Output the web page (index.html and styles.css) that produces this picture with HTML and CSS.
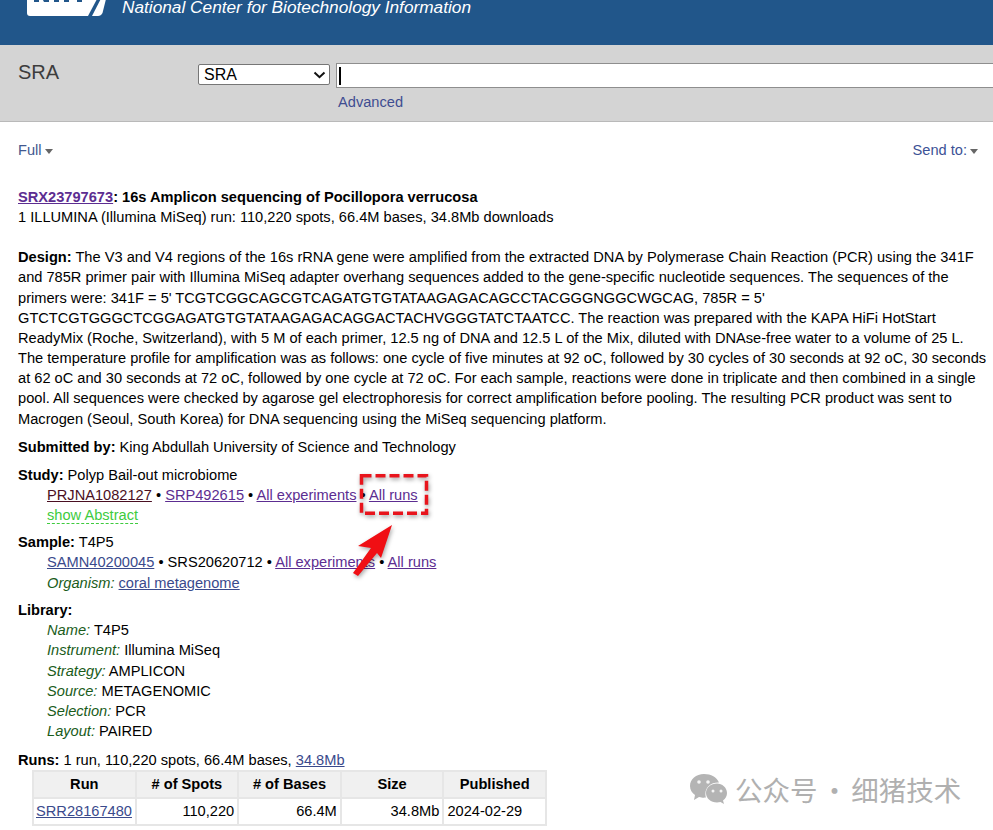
FILE: index.html
```html
<!DOCTYPE html>
<html lang="en">
<head>
<meta charset="utf-8">
<title>SRA</title>
<link rel="stylesheet" href="styles.css">
</head>
<body>
<header class="banner">
  <div class="banner-inner">
    <svg class="nih-logo" width="84" height="34" viewBox="0 0 84 34" aria-hidden="true">
      <path d="M3 0H78.500L61 33H3Q0 33 0 30V3Q0 0 3 0Z" fill="#fff"/>
      <path d="M83 0L75.500 30Q74 33 71 33H65L82 0Z" fill="#fff"/>
      <path d="M7 4h5l6 10V4h4v15h-5L12 9v10H7zM27 4h5v15h-5zM37 4h5v5h8V4h5v15h-5v-5h-8v5h-5z" fill="#21568a"/>
    </svg>
    <span class="ncbi-name">National Center for Biotechnology Information</span>
  </div>
</header>
<section class="search-bar">
  <div class="db-title">SRA</div>
  <div class="db-select">SRA
    <svg width="13" height="8" viewBox="0 0 13 8" aria-hidden="true"><path d="M1.500 1.500L6.500 6.200l5-4.700" fill="none" stroke="#111" stroke-width="2"/></svg>
  </div>
  <div class="search-col">
    <div class="search-input"><span class="caret"></span></div>
    <a class="advanced" href="#">Advanced</a>
  </div>
</section>
<main class="content">
  <div class="toolbar">
    <span class="menu-link menu-full">Full<i class="tri"></i></span>
    <span class="menu-link menu-send">Send to:<i class="tri"></i></span>
  </div>
  <h1 class="title"><a class="visited" href="#">SRX23797673</a>: 16s Amplicon sequencing of Pocillopora verrucosa</h1>
  <p class="sub">1 ILLUMINA (Illumina MiSeq) run: 110,220 spots, 66.4M bases, 34.8Mb downloads</p>
  <p class="design"><b>Design:</b> The V3 and V4 regions of the 16s rRNA gene were amplified from the extracted DNA by Polymerase Chain Reaction (PCR) using the 341F and 785R primer pair with Illumina MiSeq adapter overhang sequences added to the gene-specific nucleotide sequences. The sequences of the primers were: 341F = 5' TCGTCGGCAGCGTCAGATGTGTATAAGAGACAGCCTACGGGNGGCWGCAG, 785R = 5' GTCTCGTGGGCTCGGAGATGTGTATAAGAGACAGGACTACHVGGGTATCTAATCC. The reaction was prepared with the KAPA HiFi HotStart ReadyMix (Roche, Switzerland), with 5 M of each primer, 12.5 ng of DNA and 12.5 L of the Mix, diluted with DNAse-free water to a volume of 25 L. The temperature profile for amplification was as follows: one cycle of five minutes at 92 oC, followed by 30 cycles of 30 seconds at 92 oC, 30 seconds at 62 oC and 30 seconds at 72 oC, followed by one cycle at 72 oC. For each sample, reactions were done in triplicate and then combined in a single pool. All sequences were checked by agarose gel electrophoresis for correct amplification before pooling. The resulting PCR product was sent to Macrogen (Seoul, South Korea) for DNA sequencing using the MiSeq sequencing platform.</p>
  <div class="block submitted"><b>Submitted by:</b> King Abdullah University of Science and Technology</div>
  <div class="block study">
    <div><b>Study:</b> Polyp Bail-out microbiome</div>
    <div class="indent"><a class="dark" href="#">PRJNA1082127</a> • <a class="visited" href="#">SRP492615</a> • <a class="visited" href="#">All experiments</a> • <a class="visited" href="#">All runs</a></div>
    <div class="indent"><a class="abstract" href="#">show Abstract</a></div>
  </div>
  <div class="block sample">
    <div><b>Sample:</b> T4P5</div>
    <div class="indent"><a href="#">SAMN40200045</a> • SRS20620712 • <a class="visited" href="#">All experiments</a> • <a class="visited" href="#">All runs</a></div>
    <div class="indent"><em>Organism:</em> <a href="#">coral metagenome</a></div>
  </div>
  <div class="block library">
    <div><b>Library:</b></div>
    <div class="indent"><em>Name:</em> T4P5</div>
    <div class="indent"><em>Instrument:</em> Illumina MiSeq</div>
    <div class="indent"><em>Strategy:</em> AMPLICON</div>
    <div class="indent"><em>Source:</em> METAGENOMIC</div>
    <div class="indent"><em>Selection:</em> PCR</div>
    <div class="indent"><em>Layout:</em> PAIRED</div>
  </div>
  <div class="block runs">
    <div><b>Runs:</b> 1 run, 110,220 spots, 66.4M bases, <a href="#">34.8Mb</a></div>
    <table class="run-table">
      <thead><tr><th>Run</th><th># of Spots</th><th># of Bases</th><th>Size</th><th>Published</th></tr></thead>
      <tbody><tr><td class="left first"><a href="#">SRR28167480</a></td><td>110,220</td><td>66.4M</td><td>34.8Mb</td><td class="left">2024-02-29</td></tr></tbody>
    </table>
  </div>
</main>
<svg class="callout-box" width="75" height="48" viewBox="0 0 75 48" aria-hidden="true">
  <rect x="4.500" y="5.750" width="65" height="37.500" fill="none" stroke="#e8141c" stroke-width="3.500" stroke-dasharray="10 4"/>
</svg>
<svg class="callout-arrow" width="50" height="60" viewBox="0 0 50 60" aria-hidden="true">
  <path d="M40 5L29 38L25 33L6 56L1 53L19 28L6 26Z" fill="#f00f14"/>
</svg>
<div class="watermark">
  <svg width="39" height="32" viewBox="0 0 39 32" aria-hidden="true">
    <path d="M15 1C7 1 1 6 1 13c0 4 2 7 5 9l-1 5 5-3c2 .6 3 .7 5 .7 1 0 1 0 2-.1-.4-1-.6-2.600-.6-3.600C16.400 14 22 9.400 29 9.400c.4 0 .6 0 1 0C28 4.500 22 1 15 1z" fill="#b4b4b4"/>
    <path d="M38 20c0-5.500-5-9.500-10-9.500-6 0-11 4-11 9.500s5 9.500 11 9.500c1 0 2.500-.3 3.500-.5l3.500 2-1-3.500c2.500-1.700 4-4.500 4-7.500z" fill="#b4b4b4"/>
    <circle cx="10" cy="9" r="1.800" fill="#f4f4f4"/><circle cx="19" cy="9" r="1.800" fill="#f4f4f4"/>
    <circle cx="24" cy="18" r="1.500" fill="#f4f4f4"/><circle cx="32" cy="18" r="1.500" fill="#f4f4f4"/>
  </svg>
  <span>公众号 · 细猪技术</span>
</div>
</body>
</html>
```
FILE: styles.css
```css
html, body { margin: 0; padding: 0; height: 830px; overflow: hidden; background: #fff; }
body { position: relative; font: 14.63px/20.15px "Liberation Sans", Arial, sans-serif; color: #000; }
a { color: #3a4a8c; text-decoration: underline; }
a.visited { color: #5c2d91; }
a.dark { color: #4a0f22; }
.banner { height: 45px; background: #21568a; padding-left: 27px; overflow: hidden; }
.banner-inner { display: flex; align-items: flex-end; gap: 11px; height: 17px; }
.nih-logo { flex: none; }
.ncbi-name { color: #fff; font-style: italic; font-size: 17.25px; line-height: 20px; white-space: nowrap; }
.search-bar { height: 76px; background: #d4d4d4; border-bottom: 1px solid #b9b9b9; display: flex; align-items: flex-start; overflow: hidden; }
.db-title { font-size: 20px; line-height: 24px; color: #3d3d3d; margin: 15px 0 0 18px; width: 180px; flex: none; }
.db-select { flex: none; box-sizing: border-box; width: 132px; height: 21px; margin-top: 19px; background: #fff; border: 1px solid #767676; border-radius: 2px; padding: 0 3px 0 5px; font-size: 16px; line-height: 19px; display: flex; justify-content: space-between; align-items: center; color: #000; }
.search-col { flex: 1; margin: 18px 0 0 6px; min-width: 0; }
.search-input { box-sizing: border-box; height: 25px; width: 700px; background: #fff; border: 1px solid #8e8e8e; padding: 3px 2px; }
.caret { display: block; width: 2px; height: 18px; background: #000; }
.advanced { display: block; margin: 4px 0 0 2px; text-decoration: none; color: #3f4d91; line-height: 20px; }
.content { padding: 0 5px 0 18px; }
.toolbar { display: flex; justify-content: space-between; padding: 18px 10px 0 0; height: 20px; }
.menu-link { color: #42588f; }
.menu-send { color: #3c5296; }
.tri { display: inline-block; width: 0; height: 0; margin-left: 3px; vertical-align: middle; border: 4.500px solid transparent; border-top: 5px solid #666; border-bottom: 0; }
.title { font-size: inherit; line-height: 20.15px; font-weight: bold; margin: 27px 0 0; }
.sub { margin: 0; }
.design { margin: 20px 0 0; }
.block { margin-top: 7.3px; }
.submitted { margin-top: 8.4px; }
.runs { margin-top: 8.4px; }
.indent { padding-left: 29px; }
em { color: #1a5c1a; font-style: italic; }
.abstract { color: #3ecb3e; text-decoration: none; border-bottom: 1px dashed #3ecb3e; }
.run-table { border-collapse: collapse; margin-left: 14px; table-layout: fixed; width: 515px; }
.run-table th, .run-table td { border: 2px solid #e6e6e6; height: 25px; padding: 0 3px; text-align: right; line-height: 20px; }
.run-table th { background: #f0f0f0; text-align: center; }
.run-table td.left { text-align: left; }
.run-table td.first { padding-left: 2px; }
.callout-box { position: absolute; left: 357px; top: 470px; filter: drop-shadow(1px 2px 2px rgba(0,0,0,.4)); }
.callout-arrow { position: absolute; left: 352px; top: 520px; filter: drop-shadow(1px 2px 2px rgba(0,0,0,.35)); }
.watermark { position: absolute; left: 689px; top: 773px; display: flex; align-items: center; gap: 7px; color: #b0b0b0; font: 27.5px/32px "Noto Sans CJK SC", sans-serif; word-spacing: -3px; white-space: nowrap; }
```
